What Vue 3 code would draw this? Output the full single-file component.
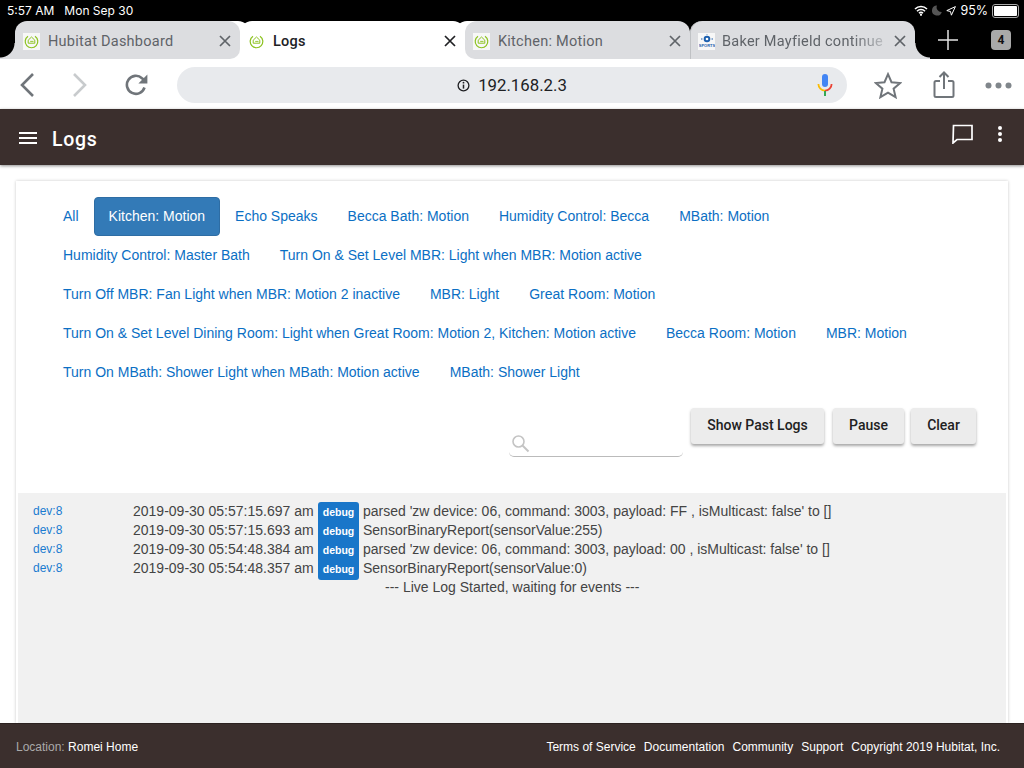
<script setup>
const tabs = [
  { title: 'Hubitat Dashboard', kind: 'hub' },
  { title: 'Logs', kind: 'hub', active: true },
  { title: 'Kitchen: Motion', kind: 'hub' },
  { title: 'Baker Mayfield continue', kind: 'sports', fade: true }
]
const filters = [
  'All', 'Kitchen: Motion', 'Echo Speaks', 'Becca Bath: Motion', 'Humidity Control: Becca', 'MBath: Motion',
  'Humidity Control: Master Bath', 'Turn On & Set Level MBR: Light when MBR: Motion active',
  'Turn Off MBR: Fan Light when MBR: Motion 2 inactive', 'MBR: Light', 'Great Room: Motion',
  'Turn On & Set Level Dining Room: Light when Great Room: Motion 2, Kitchen: Motion active', 'Becca Room: Motion', 'MBR: Motion',
  'Turn On MBath: Shower Light when MBath: Motion active', 'MBath: Shower Light'
]
const logs = [
  ['2019-09-30 05:57:15.697 am', "parsed 'zw device: 06, command: 3003, payload: FF , isMulticast: false' to []"],
  ['2019-09-30 05:57:15.693 am', 'SensorBinaryReport(sensorValue:255)'],
  ['2019-09-30 05:54:48.384 am', "parsed 'zw device: 06, command: 3003, payload: 00 , isMulticast: false' to []"],
  ['2019-09-30 05:54:48.357 am', 'SensorBinaryReport(sensorValue:0)']
]
const footerLinks = ['Terms of Service', 'Documentation', 'Community', 'Support', 'Copyright 2019 Hubitat, Inc.']
</script>

<template>
  <div class="page">
    <div class="status">
      <div class="status-left"><span>5:57 AM</span><span>Mon Sep 30</span></div>
      <div class="status-right">
        <svg width="14" height="11" viewBox="0 0 14 11"><path d="M1 4a8.5 8.5 0 0 1 12 0M3 6.2a5.6 5.6 0 0 1 8 0M5 8.2a2.8 2.8 0 0 1 4 0" fill="none" stroke="#fff" stroke-width="1.6"/><circle cx="7" cy="9.8" r="1.1" fill="#fff"/></svg>
        <svg width="10" height="11" viewBox="0 0 10 11"><path d="M5 .5a5 5 0 1 0 4.8 6.4A4.6 4.6 0 0 1 5 .5z" fill="#555"/></svg>
        <svg width="10" height="10" viewBox="0 0 10 10"><path d="M9.4.6 5.4 9.2 4.5 5.5.8 4.6z" fill="none" stroke="#fff" stroke-width="1"/></svg>
        <span>95%</span>
        <span class="battery"><span class="battery-fill"></span></span>
      </div>
    </div>

    <div class="tabstrip">
      <div v-for="t in tabs" :key="t.title" class="tab" :class="{ active: t.active }">
        <span class="favicon" :class="{ plain: t.active }">
          <svg v-if="t.kind === 'hub'" width="15" height="15" viewBox="0 0 15 15">
            <path d="M4 2.200A6.300 6.300 0 1 0 11 2.200" fill="none" stroke="#8cc21f" stroke-width="1.200"/>
            <path d="M4.200 9.200V6.200L7.500 3l3.300 3.200v3z" fill="none" stroke="#8cc21f" stroke-width="1"/>
            <path d="M6.200 7.400h3.300" stroke="#8cc21f" stroke-width=".9"/>
          </svg>
          <svg v-else width="16" height="16" viewBox="0 0 16 16">
            <circle cx="8" cy="6" r="3.300" fill="#1c5fae"/>
            <circle cx="8" cy="6" r="1.300" fill="#fff"/>
            <path d="M3.500 6h-1.500M14 6h-1.500M8 1.500V1" stroke="#1c5fae" stroke-width="1"/>
            <text x="8" y="13.500" text-anchor="middle" class="fav-text">SPORTS</text>
          </svg>
        </span>
        <span class="tab-title" :class="{ fade: t.fade }">{{ t.title }}</span>
        <svg class="tab-close" width="12" height="12" viewBox="0 0 12 12"><path d="M1 1l10 10M11 1 1 11" fill="none" stroke="currentColor" stroke-width="1.700"/></svg>
      </div>
      <div class="strip-actions">
        <svg width="20" height="20" viewBox="0 0 20 20"><path d="M10 0v20M0 10h20" stroke="#e4e4e4" stroke-width="1.500"/></svg>
        <span class="tab-count">4</span>
      </div>
    </div>

    <div class="toolbar">
      <div class="nav">
        <svg width="16" height="26" viewBox="0 0 16 26"><path d="M14 2 3 13l11 11" fill="none" stroke="#70757a" stroke-width="2.600"/></svg>
        <svg width="16" height="26" viewBox="0 0 16 26"><path d="M2 2l11 11L2 24" fill="none" stroke="#c8cbcd" stroke-width="2.600"/></svg>
        <svg width="24" height="24" viewBox="0 0 24 24"><path d="M19.500 14.500A9 9 0 1 1 17 5.200L21 8.600" fill="none" stroke="#70757a" stroke-width="2.600"/><path d="M22.400 1.600v9h-9z" fill="#70757a"/></svg>
      </div>
      <div class="omnibox">
        <svg width="13" height="13" viewBox="0 0 13 13"><circle cx="6.500" cy="6.500" r="5.400" fill="none" stroke="#202124" stroke-width="1.300"/><path d="M6.500 5.600v4" stroke="#202124" stroke-width="1.500"/><circle cx="6.500" cy="3.700" r=".9" fill="#202124"/></svg>
        <span class="url">192.168.2.3</span>
        <svg class="mic" width="16" height="24" viewBox="0 0 16 24">
          <rect x="5" y="1" width="6" height="13" rx="3" fill="#4285f4"/>
          <path d="M1.400 11a6.600 6.600 0 0 0 6.600 6.600" fill="none" stroke="#fbbc05" stroke-width="1.800"/>
          <path d="M8 17.600a6.600 6.600 0 0 0 6.600-6.600" fill="none" stroke="#ea4335" stroke-width="1.800"/>
          <path d="M8 18v5" stroke="#34a853" stroke-width="2"/>
        </svg>
      </div>
      <div class="tools">
        <svg width="28" height="27" viewBox="0 0 28 27"><path d="M14 2.200l3.500 8 8.700.8-6.600 5.700 2 8.500-7.600-4.500-7.600 4.500 2-8.500L1.800 11l8.700-.8z" fill="none" stroke="#70757a" stroke-width="2"/></svg>
        <svg width="22" height="28" viewBox="0 0 22 28"><path d="M7 10H3a1.500 1.500 0 0 0-1.500 1.500v13A1.500 1.500 0 0 0 3 26h16a1.500 1.500 0 0 0 1.500-1.500v-13A1.500 1.500 0 0 0 19 10h-4M11 18V2M6.500 6 11 1.500 15.500 6" fill="none" stroke="#70757a" stroke-width="2"/></svg>
        <svg width="27" height="7" viewBox="0 0 27 7"><circle cx="3.500" cy="3.500" r="3" fill="#80868b"/><circle cx="13.500" cy="3.500" r="3" fill="#80868b"/><circle cx="23.500" cy="3.500" r="3" fill="#80868b"/></svg>
      </div>
    </div>

    <header class="appbar">
      <svg width="18" height="12" viewBox="0 0 18 12"><path d="M0 1h18M0 6h18M0 11h18" stroke="#fff" stroke-width="2"/></svg>
      <span class="appbar-title">Logs</span>
      <div class="appbar-actions">
        <svg width="21" height="20" viewBox="0 0 21 20"><path d="M1.500 1.500h18.500v14H5L1 19z" fill="none" stroke="#fff" stroke-width="1.700"/></svg>
        <svg width="4" height="16" viewBox="0 0 4 16"><circle cx="2" cy="2" r="2" fill="#fff"/><circle cx="2" cy="8" r="2" fill="#fff"/><circle cx="2" cy="14" r="2" fill="#fff"/></svg>
      </div>
    </header>

    <main class="content">
      <section class="card">
        <nav class="filters">
          <a v-for="(f, i) in filters" :key="f" class="filter" :class="{ selected: i === 1 }">{{ f }}</a>
        </nav>
        <div class="controls">
          <div class="search">
            <svg width="19" height="19" viewBox="0 0 19 19"><circle cx="7.500" cy="7.500" r="5.500" fill="none" stroke="#c4c4c4" stroke-width="1.600"/><path d="M11.500 11.500l6 6" stroke="#c4c4c4" stroke-width="2"/></svg>
          </div>
          <button class="btn btn-past">Show Past Logs</button>
          <button class="btn btn-pause">Pause</button>
          <button class="btn btn-clear">Clear</button>
        </div>
        <div class="logbox">
          <div v-for="l in logs" :key="l[0]" class="logrow">
            <a class="dev">dev:8</a>
            <span class="stamp">{{ l[0] }}</span>
            <span class="level">debug</span>
            <span class="msg">{{ l[1] }}</span>
          </div>
          <div class="live">--- Live Log Started, waiting for events ---</div>
        </div>
      </section>
    </main>

    <footer class="footer">
      <div class="location"><span class="loc-label">Location: </span>Romei Home</div>
      <div class="links"><span v-for="f in footerLinks" :key="f">{{ f }}</span></div>
    </footer>
  </div>
</template>

<style>
html, body { margin: 0; background: #fff; overflow: hidden; }
</style>

<style scoped>
.page {
  width: 1024px;
  height: 768px;
  display: flex;
  flex-direction: column;
  overflow: hidden;
  font-family: "Liberation Sans", Arial, sans-serif;
  background: #fff;
}
.status {
  height: 21px;
  flex: none;
  background: #000;
  color: #fff;
  display: flex;
  justify-content: space-between;
  align-items: center;
  padding: 0 5px 0 7px;
  font: 12px Inter, sans-serif;
}
.status-left { display: flex; gap: 10px; }
.status-right { display: flex; align-items: center; gap: 4px; font-size: 12.500px; }
.battery {
  width: 23px;
  height: 10px;
  border: 1px solid #aaa;
  border-radius: 3px;
  padding: 1px;
  display: flex;
}
.battery-fill { flex: 1; background: #fff; border-radius: 1px; }

.tabstrip {
  height: 38px;
  flex: none;
  display: flex;
  background: #000;
  padding-left: 15px;
  position: relative;
}
.tabstrip::before {
  content: "";
  position: absolute;
  left: 0;
  bottom: 0;
  width: 16px;
  height: 16px;
  background: radial-gradient(circle at 0 0, #000 14px, #dcdde0 15px);
}
.tab {
  width: 225px;
  flex: none;
  display: flex;
  align-items: center;
  box-sizing: border-box;
  padding: 2px 9px 0 8px;
  background: #dcdde0;
  border-radius: 12px 12px 0 0;
  color: #5f6368;
  font: 14.500px Roboto, sans-serif;
  letter-spacing: .25px;
  position: relative;
}
.tab:first-child { border-bottom-right-radius: 10px; box-shadow: 10px 0 0 #fff; }
.tab.active { background: #fff; color: #202124; font-weight: 500; z-index: 1; box-shadow: none; }
.tab.active + .tab { border-bottom-left-radius: 10px; box-shadow: -10px 0 0 #fff; }
.tab:nth-child(4) { box-shadow: inset 1px 0 0 #bfc1c4; }
.tab:nth-child(4) .tab-title { margin-left: -1px; margin-right: 1px; }
.tab:nth-child(4)::after {
  content: "";
  position: absolute;
  right: -15px;
  bottom: 0;
  width: 16px;
  height: 16px;
  background: radial-gradient(circle at 100% 0, #000 14px, #dcdde0 15px);
}
.favicon {
  width: 17px;
  height: 17px;
  background: #f7f7f7;
  display: flex;
  align-items: center;
  justify-content: center;
  margin-right: 8px;
  flex: none;
}
.favicon.plain { background: transparent; }
.fav-text { font: 700 4px "Liberation Sans", sans-serif; fill: #1c5fae; letter-spacing: 0; }
.tab-title { flex: 1; white-space: nowrap; overflow: hidden; }
.tab-title.fade {
  -webkit-mask-image: linear-gradient(90deg, #000 80%, rgba(0,0,0,.25) 100%);
  mask-image: linear-gradient(90deg, #000 80%, rgba(0,0,0,.25) 100%);
}
.tab-close { flex: none; margin-left: 9px; }
.strip-actions {
  flex: 1;
  display: flex;
  align-items: center;
  padding: 0 0 0 23px;
  gap: 33px;
}
.tab-count {
  width: 20px;
  height: 20px;
  background: #a9a9a9;
  border-radius: 4px;
  color: #111;
  font: 700 12px Roboto, sans-serif;
  display: flex;
  align-items: center;
  justify-content: center;
}

.toolbar {
  height: 50px;
  flex: none;
  box-sizing: border-box;
  display: flex;
  align-items: center;
  background: #fff;
  padding: 2px 12px 0 19px;
}
.nav { display: flex; align-items: center; gap: 37px; width: 158px; flex: none; }
.omnibox {
  width: 670px;
  height: 36px;
  flex: none;
  background: #e8eaed;
  border-radius: 18px;
  display: flex;
  align-items: center;
  justify-content: center;
  gap: 8px;
  position: relative;
  color: #202124;
  font: 16.800px Roboto, sans-serif;
}
.mic { position: absolute; right: 14px; top: 6px; }
.tools { flex: 1; display: flex; align-items: center; justify-content: space-between; padding-left: 27px; }

.appbar {
  height: 56px;
  flex: none;
  box-sizing: border-box;
  background: #3b2f2d;
  color: #fff;
  display: flex;
  align-items: center;
  padding: 2px 22px 0 19px;
  box-shadow: 0 1px 3px rgba(0,0,0,.45);
  position: relative;
  z-index: 2;
}
.appbar-title { font: 500 19.500px Roboto, sans-serif; letter-spacing: .7px; margin-left: 15px; padding-top: 2px; }
.appbar-actions { margin-left: auto; display: flex; align-items: center; gap: 25px; margin-top: -8px; }

.content {
  flex: 1;
  min-height: 0;
  padding: 16px 16px 0;
  display: flex;
  overflow: hidden;
}
.card {
  flex: 1;
  min-width: 0;
  display: flex;
  flex-direction: column;
  background: #fff;
  box-shadow: 0 0 3px rgba(0,0,0,.22);
  padding: 0 2px;
}
.filters {
  display: flex;
  flex-wrap: wrap;
  width: 920px;
  margin: 16px 0 0 30px;
}
.filter {
  height: 39px;
  box-sizing: border-box;
  padding: 0 15px 2px;
  display: flex;
  align-items: center;
  color: #0b6fc4;
  font-size: 14px;
  white-space: nowrap;
}
.filter.selected {
  background: #337ab7;
  color: #fff;
  border: 1px solid #2e6da4;
  border-radius: 4px;
  padding: 0 14px 2px;
}
.controls {
  height: 101px;
  flex: none;
  display: flex;
  align-items: flex-start;
  padding-top: 16px;
  box-sizing: border-box;
}
.search {
  width: 174px;
  height: 24px;
  margin: 25px 0 0 491px;
  box-sizing: border-box;
  border-bottom: 1px solid #bbb;
  border-radius: 0 0 5px 5px;
  padding: 1px 0 0 2px;
  flex: none;
}
.btn {
  height: 36px;
  border: 0;
  padding: 0 0 2px;
  background: #ececec;
  color: #212121;
  border-radius: 3px;
  font: 500 14px Roboto, sans-serif;
  box-shadow: 0 2px 3px rgba(0,0,0,.35);
  flex: none;
}
.btn-past { width: 133px; margin-left: 8px; }
.btn-pause { width: 71px; margin-left: 9px; }
.btn-clear { width: 65px; margin-left: 7px; }
.logbox {
  flex: 1;
  background: #f1f1f1;
  padding: 9px 0 0 15px;
  color: #444;
  font-size: 14px;
}
.logrow { height: 19px; display: flex; align-items: flex-start; white-space: nowrap; line-height: 19px; }
.dev { width: 100px; flex: none; color: #1a7bd0; font-size: 12px; }
.stamp { width: 185px; flex: none; }
.level {
  width: 41px;
  height: 19px;
  flex: none;
  background: #1976c9;
  color: #fff;
  font-size: 10.500px;
  font-weight: 700;
  text-align: center;
  line-height: 21px;
  margin-right: 4px;
}
.logrow:first-child .level { border-radius: 3px 3px 0 0; }
.logrow:nth-child(4) .level { border-radius: 0 0 3px 3px; height: 21px; }
.live { height: 19px; line-height: 19px; padding-left: 352px; }

.footer {
  height: 45px;
  flex: none;
  box-sizing: border-box;
  background: #3b2f2d;
  border-top: 1px solid #2c2220;
  color: #fff;
  font-size: 12px;
  display: flex;
  align-items: center;
  justify-content: space-between;
  padding: 1px 24px 0 16px;
  position: relative;
  z-index: 2;
}
.loc-label { color: #aaa; }
.links { display: flex; gap: 8px; }
</style>
